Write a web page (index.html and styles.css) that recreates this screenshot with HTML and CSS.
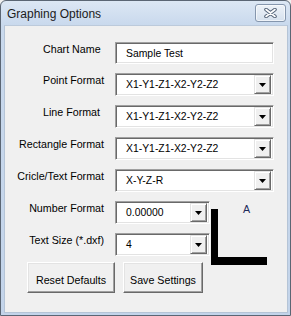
FILE: index.html
```html
<!DOCTYPE html>
<html lang="en">
<head>
  <meta charset="UTF-8">
  <title>Graphing Options</title>
  <link rel="stylesheet" href="styles.css">
</head>
<body>
  <div class="window">
    <div class="titlebar">
      <span class="title">Graphing Options</span>
      <button class="close" type="button" aria-label="Close">
        <svg width="13" height="10" viewBox="0 0 13 10">
          <path d="M2 1.5 L11 8.5 M11 1.5 L2 8.5" stroke="#56657a" stroke-width="3.6" stroke-linecap="round"/>
          <path d="M2 1.5 L11 8.5 M11 1.5 L2 8.5" stroke="#ffffff" stroke-width="1.6" stroke-linecap="round"/>
        </svg>
      </button>
    </div>

    <div class="content">
      <div class="form">
        <label class="lbl lbl-left">Chart Name</label>
        <div class="textbox wide">Sample Test</div>

        <label class="lbl lbl-left">Point Format</label>
        <div class="combo wide"><span class="value">X1-Y1-Z1-X2-Y2-Z2</span><span class="drop"><svg width="7" height="4" viewBox="0 0 7 4"><polygon points="0,0 7,0 3.5,4" fill="#000"/></svg></span></div>

        <label class="lbl lbl-left">Line Format</label>
        <div class="combo wide"><span class="value">X1-Y1-Z1-X2-Y2-Z2</span><span class="drop"><svg width="7" height="4" viewBox="0 0 7 4"><polygon points="0,0 7,0 3.5,4" fill="#000"/></svg></span></div>

        <label class="lbl">Rectangle Format</label>
        <div class="combo wide"><span class="value">X1-Y1-Z1-X2-Y2-Z2</span><span class="drop"><svg width="7" height="4" viewBox="0 0 7 4"><polygon points="0,0 7,0 3.5,4" fill="#000"/></svg></span></div>

        <label class="lbl">Cricle/Text Format</label>
        <div class="combo wide"><span class="value">X-Y-Z-R</span><span class="drop"><svg width="7" height="4" viewBox="0 0 7 4"><polygon points="0,0 7,0 3.5,4" fill="#000"/></svg></span></div>

        <label class="lbl">Number Format</label>
        <div class="combo"><span class="value">0.00000</span><span class="drop"><svg width="7" height="4" viewBox="0 0 7 4"><polygon points="0,0 7,0 3.5,4" fill="#000"/></svg></span></div>

        <!-- text preview: letter plus the size marker -->
        <div class="preview">
          <span class="preview-letter">A</span>
          <span class="bar-v"></span>
          <span class="bar-h"></span>
        </div>

        <label class="lbl">Text Size (*.dxf)</label>
        <div class="combo"><span class="value">4</span><span class="drop"><svg width="7" height="4" viewBox="0 0 7 4"><polygon points="0,0 7,0 3.5,4" fill="#000"/></svg></span></div>
      </div>

      <div class="actions">
        <button class="btn btn-reset" type="button">Reset Defaults</button>
        <button class="btn btn-save" type="button">Save Settings</button>
      </div>
    </div>
  </div>
</body>
</html>
```

FILE: styles.css
```css
/* Dialog window */
body {
  margin: 0;
  padding: 0;
  font-family: 'Liberation Sans', Arial, sans-serif;
  font-size: 10.7px;
  color: #000;
  background: #f0f0f0;
}

.window {
  width: 291px;
  height: 316px;
  box-sizing: border-box;
  border: 1px solid #5b6674;
  border-radius: 6px 6px 0 0;
  background: linear-gradient(to bottom, #dce7f4 0px, #c9d9ed 24px, #c3d4ea 100%);
  display: flex;
  flex-direction: column;
}

.titlebar {
  height: 24px;
  display: flex;
  justify-content: space-between;
  align-items: flex-start;
  padding: 0 4px 0 6px;
}

.title {
  font-size: 12px;
  line-height: 14px;
  margin-top: 6px;
  color: #1b1b1b;
}

.close {
  width: 31px;
  height: 18px;
  margin-top: 3px;
  padding: 0;
  border: 1px solid #8596ad;
  border-radius: 3px;
  background: linear-gradient(to bottom, #edf2f8, #d6e1ee);
  box-shadow: inset 0 0 0 1px rgba(255, 255, 255, 0.6);
  display: flex;
  align-items: center;
  justify-content: center;
}

.content {
  flex: 1;
  margin: 0 2px 2px 3px;
  background: #f0f0f0;
  border: 1px solid #b5c4d6;
  border-top-color: #bccadb;
}

/* Form grid */
.form {
  display: grid;
  grid-template-columns: 110px 95px 64px;
  row-gap: 9px;
  padding-top: 16px;
}

.lbl {
  align-self: start;
  margin-top: 1px;
  line-height: 13px;
  text-align: right;
  padding-right: 11px;
  white-space: nowrap;
}

.lbl-left {
  text-align: left;
  padding-left: 38px;
  padding-right: 0;
}

.wide {
  grid-column: 2 / 4;
}

.textbox,
.combo {
  box-sizing: border-box;
  height: 23px;
  background: #fff;
  border-top: 1px solid #a0a0a0;
  border-left: 1px solid #a0a0a0;
  border-right: 1px solid #fff;
  border-bottom: 1px solid #fff;
  box-shadow: inset 1px 1px 0 #696969, inset -1px -1px 0 #e3e3e3;
  display: flex;
  align-items: center;
  padding-left: 10px;
  line-height: 13px;
  font-size: 10.4px;
}

.textbox {
  height: 22px;
}

.combo {
  padding-right: 2px;
}

.combo .value {
  flex: 1;
}

.drop {
  box-sizing: border-box;
  width: 17px;
  height: 19px;
  background: #f0f0f0;
  border-top: 1px solid #e3e3e3;
  border-left: 1px solid #e3e3e3;
  border-right: 1px solid #696969;
  border-bottom: 1px solid #696969;
  box-shadow: inset 1px 1px 0 #fff, inset -1px -1px 0 #a0a0a0;
  display: flex;
  align-items: center;
  justify-content: center;
  padding-top: 1px;
}

/* Preview canvas next to the number/size rows */
.preview {
  grid-column: 3;
  grid-row: 6 / span 2;
  position: relative;
}

.preview-letter {
  position: absolute;
  left: 33px;
  top: 2px;
  line-height: 13px;
  color: #1d2b5a;
}

.bar-v {
  position: absolute;
  left: 1px;
  top: 8px;
  width: 7px;
  height: 56px;
  background: #000;
}

.bar-h {
  position: absolute;
  left: 1px;
  top: 56px;
  width: 56px;
  height: 8px;
  background: #000;
}

/* Buttons */
.actions {
  display: flex;
  gap: 8px;
  padding-left: 22px;
  margin-top: 6px;
}

.btn {
  box-sizing: border-box;
  height: 31px;
  padding: 5px 0 0;
  font-family: 'Liberation Sans', Arial, sans-serif;
  font-size: 10.7px;
  color: #000;
  background: #f0f0f0;
  border-top: 1px solid #fff;
  border-left: 1px solid #fff;
  border-right: 1px solid #696969;
  border-bottom: 1px solid #696969;
  box-shadow: inset -1px -1px 0 #a0a0a0, inset 1px 1px 0 #e3e3e3;
}

.btn-reset {
  width: 88px;
}

.btn-save {
  width: 80px;
}
```
